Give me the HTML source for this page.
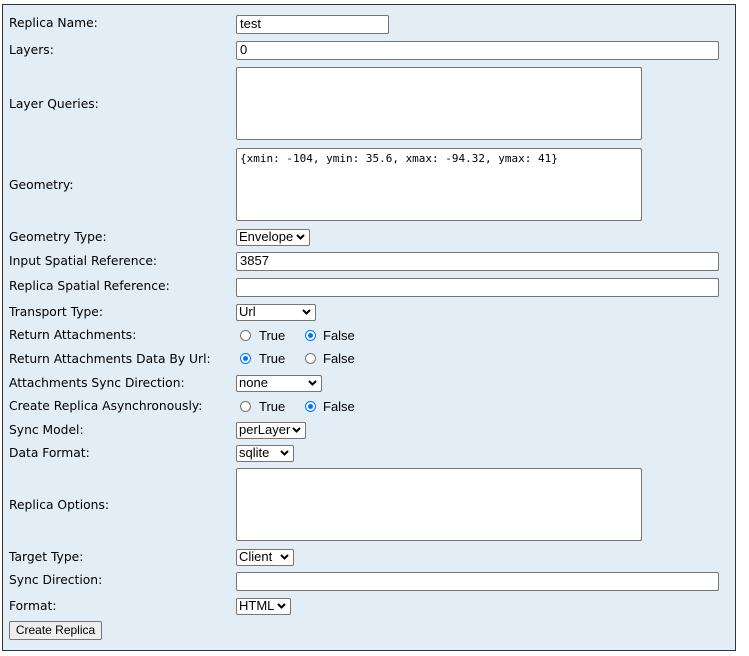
<!DOCTYPE html>
<html><head><style>
body{margin:0;width:749px;height:656px;background:#fff;font-family:"DejaVu Sans",Verdana,sans-serif;font-size:12px;color:#000;position:relative;overflow:hidden}
.box{position:absolute;left:2px;top:4px;width:732px;height:645px;border:1px solid #333;background:#e3edf6}
.l{position:absolute;left:9px;line-height:16px;transform:translateY(-8px);font-size:12.3px}
.f{position:absolute;left:236px;background:#fff;border:1px solid #767676;border-radius:2px;box-sizing:border-box;font-family:"Liberation Sans",Arial,sans-serif;font-size:13px;padding-left:3px;line-height:16px}
.s{position:absolute;left:236px;background:#fff;border:1px solid #767676;border-radius:2px;box-sizing:border-box;font-family:"Liberation Sans",Arial,sans-serif;font-size:13px;padding-left:2px;line-height:14px;height:17px}
.s svg{position:absolute;right:4px;top:4px}
.mono{font-family:"DejaVu Sans Mono",monospace;font-size:11px;padding-top:2px}
.r{position:absolute;font-family:"Liberation Sans",Arial,sans-serif;font-size:13px;line-height:16px}
.c{position:absolute;width:11px;height:11px;border:1px solid #767676;border-radius:50%;background:#fff;box-sizing:border-box}
.c.on{border:1px solid #0075ff}
.c.on::after{content:"";position:absolute;left:2px;top:2px;width:5px;height:5px;border-radius:50%;background:#0075ff}
.btn{position:absolute;left:9px;top:621px;width:93px;height:19px;border:1px solid #767676;border-radius:2px;background:#efefef;box-sizing:border-box;font-family:"Liberation Sans",Arial,sans-serif;font-size:12px;text-align:center;line-height:17px}
</style></head><body>
<div class="box"></div>
<div class="l" style="top:23px">Replica Name:</div>
<div class="l" style="top:50px">Layers:</div>
<div class="l" style="top:104px">Layer Queries:</div>
<div class="l" style="top:185px">Geometry:</div>
<div class="l" style="top:237px">Geometry Type:</div>
<div class="l" style="top:261px">Input Spatial Reference:</div>
<div class="l" style="top:286px">Replica Spatial Reference:</div>
<div class="l" style="top:312px">Transport Type:</div>
<div class="l" style="top:335px">Return Attachments:</div>
<div class="l" style="top:359px">Return Attachments Data By Url:</div>
<div class="l" style="top:383px">Attachments Sync Direction:</div>
<div class="l" style="top:406px">Create Replica Asynchronously:</div>
<div class="l" style="top:430px">Sync Model:</div>
<div class="l" style="top:453px">Data Format:</div>
<div class="l" style="top:505px">Replica Options:</div>
<div class="l" style="top:557px">Target Type:</div>
<div class="l" style="top:580px">Sync Direction:</div>
<div class="l" style="top:606px">Format:</div>

<div class="f" style="top:15px;width:153px;height:19px">test</div>
<div class="f" style="top:41px;width:483px;height:19px">0</div>
<div class="f" style="top:67px;width:406px;height:73px"></div>
<div class="f mono" style="top:148px;width:406px;height:73px">{xmin: -104, ymin: 35.6, xmax: -94.32, ymax: 41}</div>
<div class="f" style="top:252px;width:483px;height:19px">3857</div>
<div class="f" style="top:278px;width:483px;height:19px"></div>
<div class="f" style="top:468px;width:406px;height:73px"></div>
<div class="f" style="top:572px;width:483px;height:19px"></div>

<div class="s" style="top:229px;width:74px">Envelope<svg width="9" height="6"><path d="M1 1l3.5 3.5L8 1" stroke="#000" stroke-width="2" fill="none"/></svg></div>
<div class="s" style="top:304px;width:80px">Url<svg width="9" height="6"><path d="M1 1l3.5 3.5L8 1" stroke="#000" stroke-width="2" fill="none"/></svg></div>
<div class="s" style="top:375px;width:86px">none<svg width="9" height="6"><path d="M1 1l3.5 3.5L8 1" stroke="#000" stroke-width="2" fill="none"/></svg></div>
<div class="s" style="top:422px;width:70px">perLayer<svg width="9" height="6"><path d="M1 1l3.5 3.5L8 1" stroke="#000" stroke-width="2" fill="none"/></svg></div>
<div class="s" style="top:445px;width:58px">sqlite<svg width="9" height="6"><path d="M1 1l3.5 3.5L8 1" stroke="#000" stroke-width="2" fill="none"/></svg></div>
<div class="s" style="top:549px;width:58px">Client<svg width="9" height="6"><path d="M1 1l3.5 3.5L8 1" stroke="#000" stroke-width="2" fill="none"/></svg></div>
<div class="s" style="top:598px;width:55px">HTML<svg width="9" height="6"><path d="M1 1l3.5 3.5L8 1" stroke="#000" stroke-width="2" fill="none"/></svg></div>

<div class="c" style="left:240px;top:330px"></div><div class="r" style="left:259px;top:328px">True</div>
<div class="c on" style="left:305px;top:330px"></div><div class="r" style="left:323px;top:328px">False</div>
<div class="c on" style="left:240px;top:353px"></div><div class="r" style="left:259px;top:351px">True</div>
<div class="c" style="left:305px;top:353px"></div><div class="r" style="left:323px;top:351px">False</div>
<div class="c" style="left:240px;top:401px"></div><div class="r" style="left:259px;top:399px">True</div>
<div class="c on" style="left:305px;top:401px"></div><div class="r" style="left:323px;top:399px">False</div>

<div class="btn">Create Replica</div>
</body></html>
